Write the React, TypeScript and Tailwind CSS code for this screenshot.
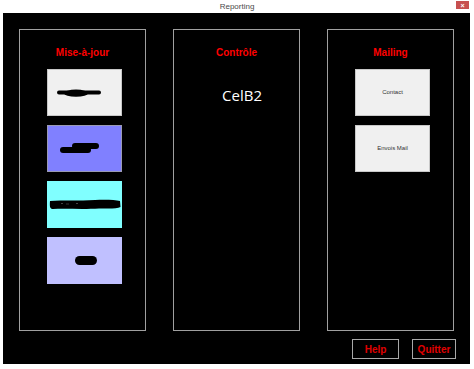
import React from "react";

const titleCls =
  "text-[10px] leading-[12px] font-bold text-[#ff0000] text-center pt-[17px] [font-family:'Liberation_Sans',Arial,sans-serif]";

const Panel = ({ title, children }: { title: string; children?: React.ReactNode }) => (
  <div className="w-[127px] h-[302px] border border-[#a0a0a0] flex flex-col">
    <div className={titleCls}>{title}</div>
    {children}
  </div>
);

const Tile = ({
  className,
  children,
}: {
  className: string;
  children?: React.ReactNode;
}) => (
  <div className={"w-[75px] h-[47px] ml-[27px] border flex " + className}>{children}</div>
);

const App = () => {
  return (
    <div className="w-[474px] h-[369px] bg-white flex flex-col [font-family:'Liberation_Sans',Arial,sans-serif]">
      {/* barre de titre */}
      <div className="relative h-[13px] flex items-center justify-center">
        <span className="text-[8px] leading-[10px] text-[#4a4a4a]">Reporting</span>
        <div className="absolute right-[5px] top-[1px] w-[13px] h-[8px] bg-[#c75050] flex items-center justify-center">
          <span className="text-white text-[7px] leading-[7px] font-bold">×</span>
        </div>
      </div>

      <div className="ml-[3px] mr-[4px] mb-[5px] flex-1 bg-black pt-[16px] pl-[16px] pr-[15px] flex flex-col">
        <div className="flex gap-[27px]">
          {/* Mise-à-jour */}
          <Panel title="Mise-à-jour">
            <div className="mt-[10px] flex flex-col gap-[9px]">
              <Tile className="bg-[#f0f0f0] border-[#c8c8c8] pl-[9px] pt-[19px]">
                <svg width="44" height="8" viewBox="0 0 44 8">
                  <rect x="0" y="1.5" width="44" height="4" rx="2" fill="#000" />
                  <ellipse cx="19" cy="4.2" rx="12" ry="3.6" fill="#000" />
                </svg>
              </Tile>
              <Tile className="bg-[#8080ff] border-[#9a9ab4] pl-[12px] pt-[17px]">
                <svg width="40" height="10" viewBox="0 0 40 10">
                  <rect x="12" y="0" width="27" height="6" rx="3" fill="#000" />
                  <rect x="0" y="4" width="31" height="6" rx="3" fill="#000" />
                </svg>
              </Tile>
              <Tile className="bg-[#80ffff] border-[#80ffff] pl-[1px] pt-[17px]">
                <svg width="72" height="11" viewBox="0 0 72 11">
                  <path
                    d="M1 2 C 14 1, 30 2, 46 1 C 58 0.5, 66 1, 71 2 L 71.5 8 C 68 10, 60 9.5, 50 9.5 C 36 10.5, 18 9.5, 4 10 C 1 10, 0.5 8, 1 2 Z"
                    fill="#000"
                  />
                  <rect x="12" y="4" width="2" height="1" fill="#444" />
                  <rect x="17" y="4.5" width="3" height="1" fill="#333" />
                  <rect x="27" y="4" width="2" height="1" fill="#444" />
                </svg>
              </Tile>
              <Tile className="bg-[#c0c0ff] border-[#c0c0ff] pl-[27px] pt-[18px]">
                <svg width="22" height="9" viewBox="0 0 22 9">
                  <rect x="0" y="0" width="22" height="9" rx="4.5" fill="#000" />
                </svg>
              </Tile>
            </div>
          </Panel>

          {/* Contrôle */}
          <Panel title="Contrôle">
            <div className="mt-[26px] pl-[11px] text-center text-white text-[15px] leading-[20px] [font-family:'Open_Sans',sans-serif]">
              CelB2
            </div>
          </Panel>

          {/* Mailing */}
          <Panel title="Mailing">
            <div className="mt-[10px] flex flex-col gap-[9px]">
              <Tile className="bg-[#f0f0f0] border-[#c8c8c8] items-center justify-center">
                <span className="text-[6px] text-[#333]">Contact</span>
              </Tile>
              <Tile className="bg-[#f0f0f0] border-[#c8c8c8] items-center justify-center">
                <span className="text-[6px] text-[#333]">Envois Mail</span>
              </Tile>
            </div>
          </Panel>
        </div>

        <div className="mt-[8px] flex justify-end gap-[13px] -mr-px">
          <div className="w-[47px] h-[20px] border border-[#a8a8a8] flex items-center justify-center text-[10px] font-bold text-[#e00000]">
            Help
          </div>
          <div className="w-[44px] h-[20px] border border-[#a8a8a8] flex items-center justify-center text-[10px] font-bold text-[#e00000]">
            Quitter
          </div>
        </div>
      </div>
    </div>
  );
};

export default App;
